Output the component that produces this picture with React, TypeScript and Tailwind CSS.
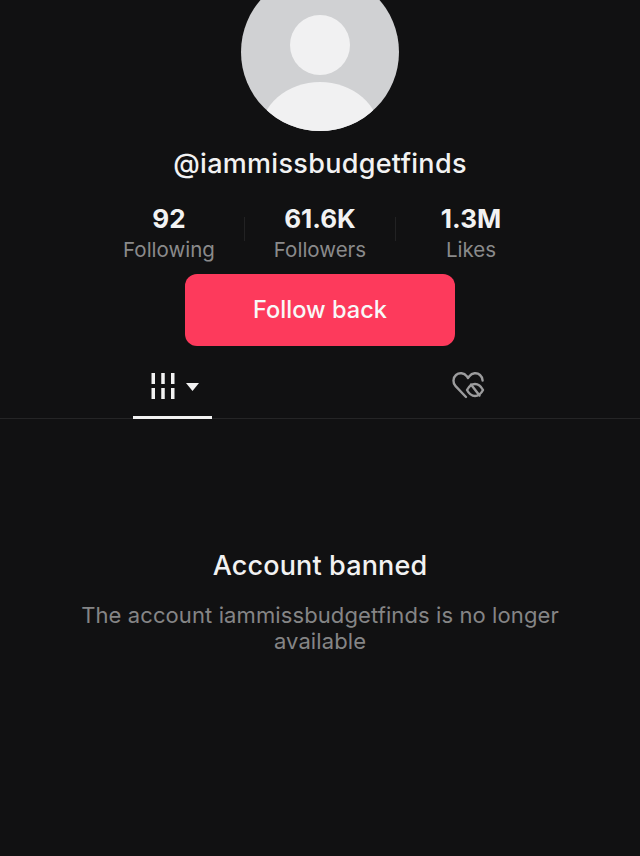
export default function App() {
  const stats = [
    { value: '92', label: 'Following' },
    { value: '61.6K', label: 'Followers' },
    { value: '1.3M', label: 'Likes' },
  ];

  return (
    <div className="h-[856px] w-[640px] overflow-hidden bg-[#111112] font-['Inter',sans-serif]">
      <div className="flex flex-col items-center">
        {/* avatar is cut off by the top of the page */}
        <div className="-mt-[27px] h-[158px] w-[158px] overflow-hidden rounded-full">
          <svg viewBox="0 0 158 158" className="h-full w-full">
            <rect width="158" height="158" fill="#d0d1d3" />
            <circle cx="79" cy="72" r="30" fill="#f1f1f2" />
            <ellipse cx="79" cy="161" rx="60" ry="52" fill="#f1f1f2" />
          </svg>
        </div>

        <div className="mt-[15px] text-[27px] leading-[36px] font-medium tracking-[0.3px] text-[#f2f2f2]">@iammissbudgetfinds</div>

        <div className="mt-[21px] grid w-[453px] grid-cols-3">
          {stats.map((s, i) => (
            <div key={s.label} className="relative flex flex-col items-center">
              <div className="text-[26px] leading-[32px] font-bold text-[#f2f2f2]">{s.value}</div>
              <div className="pt-px text-[20.5px] leading-[28px] text-[#8a8a8b]">{s.label}</div>
              {i < 2 && <div className="absolute top-[14px] right-0 h-[24px] w-px bg-[#222223]" />}
            </div>
          ))}
        </div>

        <div className="mt-[10px] flex h-[72px] w-[270px] items-center justify-center rounded-xl bg-[#fd3a5c] text-[23.6px] font-medium text-[#f8f8f8]">
          Follow back
        </div>
      </div>

      <div className="mt-[12px] flex h-[61px] items-stretch border-b border-[#252526] pl-[133px]">
        <div className="-mb-px flex w-[79px] items-center justify-center gap-[11px] border-b-[3px] border-[#f2f2f2] pb-[2px] pl-[5px]">
          <svg width="24" height="26" viewBox="0 0 24 26" fill="#f2f2f2">
            <rect x="0.500" y="0" width="3.500" height="11" />
            <rect x="10.250" y="0" width="3.500" height="11" />
            <rect x="20" y="0" width="3.500" height="11" />
            <rect x="0.500" y="15" width="3.500" height="11" />
            <rect x="10.250" y="15" width="3.500" height="11" />
            <rect x="20" y="15" width="3.500" height="11" />
          </svg>
          <svg width="13" height="8" viewBox="0 0 13 8" fill="#f2f2f2" className="mt-[2px]">
            <path d="M0 0h13L6.500 8z" />
          </svg>
        </div>
        <div className="ml-[240px] flex items-center pb-[6px]">
          <svg width="34" height="30" viewBox="0 0 34 30" fill="none" stroke="#9c9c9d" strokeWidth="2.400" strokeLinecap="round" strokeLinejoin="round">
            <path d="M14 27 3.600 16.200C.6 13 .8 7.800 4 5c3.200-2.700 8-2.200 10.800 1.200L16 8l1.400-1.800C20 2.800 25 2.300 28 5c1.800 1.600 2.600 3.600 2.600 5.600" />
            <path d="M15 20c2-3.800 5-6 8-6s6 2.200 8 6c-2 3.800-5 6-8 6s-6-2.200-8-6z" />
            <path d="M19 14.500l8.500 11" />
          </svg>
        </div>
      </div>

      <div className="mt-[129px] flex flex-col items-center">
        <div className="text-[27px] leading-[36px] font-medium tracking-[0.150px] text-[#f2f2f2]">Account banned</div>
        <div className="mt-[18px] w-[500px] text-center text-[22px] leading-[26px] tracking-[0.100px] text-[#858586]">
          The account iammissbudgetfinds is no longer available
        </div>
      </div>
    </div>
  );
}
